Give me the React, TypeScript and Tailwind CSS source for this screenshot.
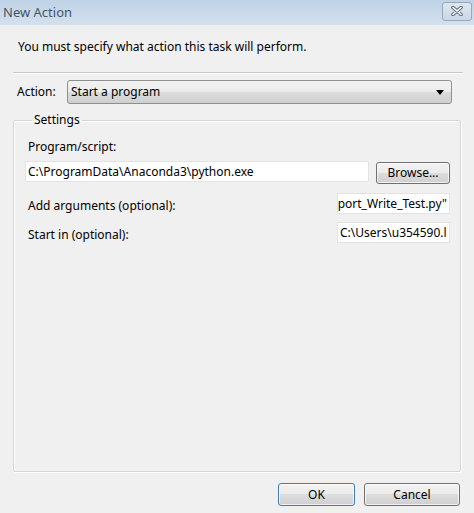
import React from "react";

const font = { fontFamily: '"Noto Sans", "Open Sans", Arial, sans-serif' };

function Win7Button({ label, isDefault = false, className = "" }: { label: string; isDefault?: boolean; className?: string }) {
  return (
    <button
      className={`flex items-center justify-center rounded-[3px] border text-[12px] text-black bg-[linear-gradient(#f2f2f2_0%,#ebebeb_50%,#dddddd_50%,#cfcfcf_100%)] shadow-[inset_0_0_0_1px_rgba(255,255,255,0.7)] ${
        isDefault ? "border-[#3c7fb1] shadow-[inset_0_0_0_1px_#bfe6fb]" : "border-[#707070]"
      } ${className}`}
    >
      {label}
    </button>
  );
}

export default function App() {
  return (
    <div style={font} className="w-[474px] h-[513px] bg-[#f0f0f0] flex flex-col text-black text-[12px] overflow-hidden">
      {/* Title bar */}
      <div className="h-[25px] flex items-center justify-between pl-[3px] pr-[2px] bg-[linear-gradient(#bfd2e6,#d3e0ee)]">
        <span className="text-[13px] text-[#445566] leading-none">New Action</span>
        <div className="w-[30px] h-[19px] mb-[3px] rounded-[3px] border border-[#9aa8b8] bg-[linear-gradient(#dde7f1,#c9d7e6)] flex items-center justify-center">
          <svg width="12" height="10" viewBox="0 0 12 10">
            <path d="M2 1.5 L10 8.5 M10 1.5 L2 8.5" stroke="#5d6876" strokeWidth="3.6" strokeLinecap="round" />
            <path d="M2 1.5 L10 8.5 M10 1.5 L2 8.5" stroke="#ffffff" strokeWidth="1.6" strokeLinecap="round" />
          </svg>
        </div>
      </div>

      {/* Body */}
      <div className="flex-1 flex flex-col px-[13px]">
        <p className="mt-[14px] ml-[5px] leading-[16px]">You must specify what action this task will perform.</p>

        <div className="mt-[17px] border-t border-[#c8c8c8] border-b-white border-b h-[2px] mr-[-2px]" />

        <div className="mt-[6px] flex items-center">
          <span className="ml-[4px] w-[50px]">Action:</span>
          <div className="flex-1 mr-[9px] h-[24px] rounded-[3px] border border-[#8e8f8f] bg-[linear-gradient(#f2f2f2_0%,#ebebeb_50%,#dddddd_50%,#cfcfcf_100%)] flex items-center justify-between pl-[3px] pr-[7px]">
            <span>Start a program</span>
            <svg width="8" height="5" viewBox="0 0 8 5">
              <path d="M0 0 H8 L4 5 Z" fill="#000" />
            </svg>
          </div>
        </div>

        <fieldset className="mt-[8px] flex-1 border border-[#d5d5d5] rounded-[2px] shadow-[inset_1px_1px_0_#ffffff,1px_1px_0_#ffffff] pl-[11px] pr-[10px]">
          <legend className="ml-[7px] px-[2px] leading-[16px]">Settings</legend>

          <div className="mt-[11px] leading-[16px] ml-[3px]">Program/script:</div>
          <div className="mt-[6px] flex items-start gap-[7px]">
            <div className="flex-1 h-[21px] bg-white border border-[#e3e3e3] flex items-center px-[2px]">
              C:\ProgramData\Anaconda3\python.exe
            </div>
            <Win7Button label="Browse..." className="w-[74px] h-[22px] mt-[1px]" />
          </div>

          <div className="mt-[8px] flex items-center justify-between">
            <span className="ml-[3px] mt-[5px]">Add arguments (optional):</span>
            <div className="w-[113px] h-[21px] bg-white border border-[#e3e3e3] flex items-center justify-end pr-[2px] whitespace-nowrap">
              port_Write_Test.py"
            </div>
          </div>

          <div className="mt-[6px] flex items-center justify-between">
            <span className="ml-[3px] mt-[5px]">Start in (optional):</span>
            <div className="w-[113px] h-[21px] bg-white border border-[#e3e3e3] flex items-center pl-[2px] whitespace-nowrap">
              C:\Users\u354590.l
            </div>
          </div>
        </fieldset>

        <div className="mt-[11px] mb-[7px] flex justify-end gap-[9px] pr-[1px]">
          <Win7Button label="OK" isDefault className="w-[77px] h-[23px]" />
          <Win7Button label="Cancel" className="w-[96px] h-[23px]" />
        </div>
      </div>
    </div>
  );
}
